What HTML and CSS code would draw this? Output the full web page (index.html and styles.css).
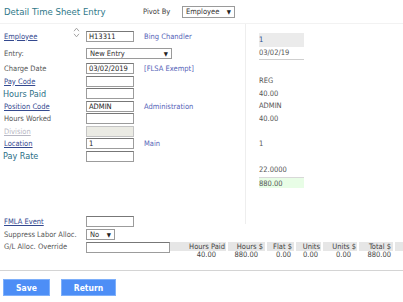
FILE: index.html
```html
<!DOCTYPE html>
<html lang="en">
<head>
  <meta charset="UTF-8">
  <title>Detail Time Sheet Entry</title>
  <link rel="stylesheet" href="styles.css">
</head>
<body>
  <div class="header">
    <h1>Detail Time Sheet Entry</h1>
    <span class="pivot-label">Pivot By</span>
    <div class="dropdown pivot">Employee<span class="caret">&#9660;</span></div>
  </div>

  <div class="main">
    <div class="form">
      <div class="row r-employee">
        <span class="label"><a href="#">Employee</a>
          <svg class="spin" width="7" height="11" viewBox="0 0 7 11"><path d="M1 4.2L3.5 1.2L6 4.2M1 6.8L3.5 9.8L6 6.8" fill="none" stroke="#999" stroke-width="0.9"/></svg>
        </span>
        <div class="field">H13311</div>
        <span class="desc">Bing Chandler</span>
      </div>
      <div class="row r-entry">
        <span class="label">Entry:</span>
        <div class="dropdown entry">New Entry<span class="caret">&#9660;</span></div>
      </div>
      <div class="row r-charge">
        <span class="label">Charge Date</span>
        <div class="field">03/02/2019</div>
        <span class="desc">[FLSA Exempt]</span>
      </div>
      <div class="row">
        <span class="label"><a href="#">Pay Code</a></span>
        <div class="field"></div>
      </div>
      <div class="row">
        <span class="label big">Hours Paid</span>
        <div class="field"></div>
      </div>
      <div class="row">
        <span class="label"><a href="#">Position Code</a></span>
        <div class="field">ADMIN</div>
        <span class="desc">Administration</span>
      </div>
      <div class="row">
        <span class="label">Hours Worked</span>
        <div class="field"></div>
      </div>
      <div class="row">
        <span class="label"><a href="#" class="disabled">Division</a></span>
        <div class="field locked"></div>
      </div>
      <div class="row">
        <span class="label"><a href="#">Location</a></span>
        <div class="field">1</div>
        <span class="desc">Main</span>
      </div>
      <div class="row">
        <span class="label big">Pay Rate</span>
        <div class="field"></div>
      </div>
      <div class="row r-fmla">
        <span class="label"><a href="#">FMLA Event</a></span>
        <div class="field"></div>
      </div>
    </div>

    <div class="summary">
      <div class="sum-key">1</div>
      <div class="sum-date">03/02/19</div>
      <div class="sum-line r-reg">REG</div>
      <div class="sum-line">40.00</div>
      <div class="sum-line">ADMIN</div>
      <div class="sum-line">40.00</div>
      <div class="sum-line"></div>
      <div class="sum-line">1</div>
      <div class="sum-line"></div>
      <div class="sum-line r-rate">22.0000</div>
      <div class="sum-total">880.00</div>
    </div>
  </div>

  <div class="bottom">
    <div class="row r-suppress">
      <span class="label">Suppress Labor Alloc.</span>
      <div class="dropdown small">No<span class="caret">&#9660;</span></div>
    </div>
    <div class="row r-gl">
      <span class="label">G/L Alloc. Override</span>
      <div class="field wide"></div>
      <table class="totals">
        <tr>
          <th class="c1">Hours Paid</th>
          <th class="c2">Hours $</th>
          <th class="c3">Flat $</th>
          <th class="c4">Units</th>
          <th class="c5">Units $</th>
          <th class="c6">Total $</th>
          <th class="c7"></th>
        </tr>
        <tr>
          <td class="c1">40.00</td>
          <td class="c2">880.00</td>
          <td class="c3">0.00</td>
          <td class="c4">0.00</td>
          <td class="c5">0.00</td>
          <td class="c6">880.00</td>
          <td class="c7"></td>
        </tr>
      </table>
    </div>
  </div>

  <div class="actions">
    <button class="btn save">Save</button>
    <button class="btn return">Return</button>
  </div>
</body>
</html>
```

FILE: styles.css
```css
body {
  margin: 0;
  width: 403px;
  height: 302px;
  overflow: hidden;
  font-family: "DejaVu Sans Condensed", "DejaVu Sans", sans-serif;
  font-size: 7.5px;
  color: #555;
  background: #fff;
}
a {
  color: #34498f;
}
a.disabled {
  color: #b8b8c4;
}

.header {
  display: flex;
  align-items: center;
  height: 23px;
  border-bottom: 1px solid #f2f2f2;
}
h1 {
  margin: 0 0 0 4px;
  width: 139px;
  font-size: 9.5px;
  font-weight: normal;
  color: #2f7889;
}
.pivot-label {
  width: 39px;
  color: #444;
}

.dropdown {
  position: relative;
  flex: none;
  box-sizing: border-box;
  height: 11px;
  line-height: 9px;
  padding-left: 3px;
  border: 1px solid #9a9a9a;
  color: #333;
  background: #fff;
}
.caret {
  position: absolute;
  right: 3px;
  top: 0;
  font-size: 6px;
  color: #222;
}
.pivot {
  width: 53px;
  height: 12px;
  line-height: 10px;
}
.entry {
  width: 86px;
}
.small {
  width: 29px;
}

.main {
  display: flex;
}
.form {
  width: 245px;
}
.row {
  display: flex;
  align-items: center;
  height: 12.5px;
}
.label {
  position: relative;
  box-sizing: border-box;
  width: 86px;
  flex: none;
  padding-left: 4px;
  color: #555;
}
.label.big {
  font-size: 9px;
  color: #2b6f86;
  padding-left: 3px;
}
.spin {
  position: absolute;
  left: 73px;
  top: -5px;
}
.field {
  flex: none;
  box-sizing: border-box;
  width: 48px;
  height: 11px;
  line-height: 9px;
  padding-left: 2px;
  border: 1px solid #9c9c9c;
  border-top-color: #777;
  color: #222;
  background: #fff;
}
.field.locked {
  background: #ebebe4;
  border-color: #c4c4c4;
}
.field.wide {
  width: 84px;
}
.desc {
  margin-left: 10px;
  color: #5563b8;
}
.r-employee {
  margin-top: 7px;
  height: 11px;
}
.r-entry {
  margin-top: 5px;
}
.r-charge {
  margin-top: 3px;
}
.r-fmla {
  margin-top: 53px;
}

.summary {
  box-sizing: border-box;
  height: 200px;
  padding: 9px 0 0 13px;
  border-left: 1px solid #eeeeee;
}
.sum-key {
  width: 45px;
  height: 14px;
  line-height: 14px;
  color: #2a4d8f;
  background: #ebebeb;
}
.sum-date {
  width: 45px;
  height: 12px;
  line-height: 11px;
  border-bottom: 1px solid #cfcfcf;
}
.sum-line {
  height: 12.6px;
  line-height: 12.6px;
}
.r-reg {
  margin-top: 15px;
}
.r-rate {
  margin-top: 1px;
}
.sum-total {
  width: 45px;
  height: 10px;
  line-height: 11px;
  border-top: 1px solid #d8d8d8;
  background: #e8fde6;
}

.bottom .row {
  height: 11px;
}
.r-suppress {
  margin-top: 1px;
}
.r-gl {
  margin-top: 2px;
  align-items: flex-start;
}
.r-gl .label {
  line-height: 10px;
}
.totals {
  flex: none;
  margin-left: -2px;
  border-collapse: separate;
  border-spacing: 2px 0;
  font-size: 7.5px;
  color: #444;
}
.totals th,
.totals td {
  box-sizing: border-box;
  padding: 0 1px 0 0;
  text-align: right;
  font-weight: normal;
  white-space: nowrap;
}
.totals th {
  height: 9px;
  line-height: 9px;
  background: #e6e6e6;
}
.totals td {
  height: 8px;
  line-height: 8px;
}
.c1 { width: 56px; }
.c2 { width: 37px; }
.c3 { width: 27px; }
.c4 { width: 25px; }
.c5 { width: 34px; }
.c6 { width: 34px; }
.c7 { width: 10px; }
th.c2, th.c3, th.c6 { padding-right: 2px; }
td.c1 { padding-right: 10px; }
td.c2 { padding-right: 7px; }
td.c3 { padding-right: 3px; }
td.c4 { padding-right: 3px; }
td.c5 { padding-right: 6px; }
td.c6 { padding-right: 2px; }

.actions {
  display: flex;
  gap: 11px;
  margin-top: 17px;
  padding: 8px 0 0 3px;
  border-top: 1px solid #d4d4d4;
}
.btn {
  height: 17px;
  padding: 0;
  border: 1px solid #7eb0fb;
  background: #4d8ef6;
  color: #fff;
  font-family: "DejaVu Sans Condensed", "DejaVu Sans", sans-serif;
  font-size: 8.5px;
  font-weight: bold;
}
.save {
  width: 47px;
}
.return {
  width: 55px;
}
```
